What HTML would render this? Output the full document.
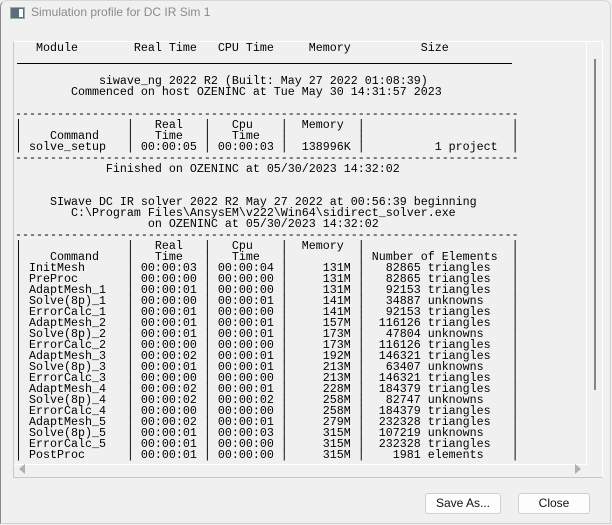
<!DOCTYPE html>
<html><head><meta charset="utf-8"><style>
html,body{margin:0;padding:0;}
body{width:612px;height:525px;background:#f0f0f0;position:relative;overflow:hidden;font-family:"Liberation Sans",sans-serif;}
.win{position:absolute;left:0;top:0;width:611px;height:524px;border-left:1px solid #8a8a8a;border-top:1px solid #d8d8d8;border-right:1px solid #d0d0d0;border-bottom:1px solid #d0d0d0;border-radius:7px 7px 0 0;box-sizing:border-box;background:#f0f0f0;}
.title{position:absolute;left:31px;top:5px;font-size:12px;color:#8a8a8a;}
.icon{position:absolute;left:10px;top:7px;width:13px;height:10px;background:#5a6e80;border:1px solid #9aa;}
.icon:after{content:"";position:absolute;right:1px;top:1px;width:4px;height:8px;background:#fff;}
.box{position:absolute;left:13px;top:41px;width:590px;height:437px;border-top:1px solid #fff;border-right:1px solid #fff;border-left:1px solid #c8c8c8;border-bottom:1px solid #c8c8c8;box-sizing:border-box;background:#f0f0f0;overflow:hidden;}
.vsep{position:absolute;left:586px;top:41px;width:1px;height:424px;background:#fff;}
.thumb{position:absolute;left:594px;top:59px;width:2px;height:331px;background:#858585;}
.hsep{position:absolute;left:14px;top:464px;width:572px;height:1px;background:#fff;}
pre{position:absolute;margin:0;font-family:"Liberation Mono",monospace;font-size:11.67px;line-height:11px;color:#000;white-space:pre;}
.solid{position:absolute;left:17px;top:63px;width:495px;height:1px;background:#000;}
.la{position:absolute;left:19px;top:464px;width:0;height:0;border-top:5px solid transparent;border-bottom:5px solid transparent;border-right:6px solid #b0b0b0;}
.ra{position:absolute;left:575px;top:464px;width:0;height:0;border-top:5px solid transparent;border-bottom:5px solid transparent;border-left:6px solid #b0b0b0;}
.btn{position:absolute;top:493px;height:21px;background:#fdfdfd;border:1px solid #d0d0d0;border-radius:3px;box-sizing:border-box;font-size:12px;text-align:center;line-height:19px;color:#111;}
</style></head><body>
<div class="win"></div>
<div class="icon"></div>
<div class="title">Simulation profile for DC IR Sim 1</div>
<div class="box"></div>
<div class="vsep"></div>
<div class="thumb"></div>
<div class="hsep"></div>
<div class="la"></div><div class="ra"></div>
<div style="position:absolute;left:14px;top:42px;width:572px;height:419px;overflow:hidden;">
<pre style="left:8px;top:0.5px;">  Module        Real Time   CPU Time     Memory          Size</pre>
<div class="solid" style="left:3px;top:21px;"></div>
<pre style="left:1px;top:0.5px;">



            siwave_ng 2022 R2 (Built: May 27 2022 01:08:39)
        Commenced on host OZENINC at Tue May 30 14:31:57 2023

------------------------------------------------------------------------
|               |   Real   |   Cpu    |  Memory  |                     |
|    Command    |   Time   |   Time   |          |                     |
| solve_setup   | 00:00:05 | 00:00:03 |  138996K |          1 project  |
------------------------------------------------------------------------
             Finished on OZENINC at 05/30/2023 14:32:02


     SIwave DC IR solver 2022 R2 May 27 2022 at 00:56:39 beginning
        C:\Program Files\AnsysEM\v222\Win64\sidirect_solver.exe
                   on OZENINC at 05/30/2023 14:32:02
------------------------------------------------------------------------
|               |   Real   |   Cpu    |  Memory  |                     |
|    Command    |   Time   |   Time   |          | Number of Elements  |
| InitMesh      | 00:00:03 | 00:00:04 |     131M |   82865 triangles   |
| PreProc       | 00:00:00 | 00:00:00 |     131M |   82865 triangles   |
| AdaptMesh_1   | 00:00:01 | 00:00:00 |     131M |   92153 triangles   |
| Solve(8p)_1   | 00:00:00 | 00:00:01 |     141M |   34887 unknowns    |
| ErrorCalc_1   | 00:00:01 | 00:00:00 |     141M |   92153 triangles   |
| AdaptMesh_2   | 00:00:01 | 00:00:01 |     157M |  116126 triangles   |
| Solve(8p)_2   | 00:00:01 | 00:00:01 |     173M |   47804 unknowns    |
| ErrorCalc_2   | 00:00:00 | 00:00:00 |     173M |  116126 triangles   |
| AdaptMesh_3   | 00:00:02 | 00:00:01 |     192M |  146321 triangles   |
| Solve(8p)_3   | 00:00:01 | 00:00:01 |     213M |   63407 unknowns    |
| ErrorCalc_3   | 00:00:00 | 00:00:00 |     213M |  146321 triangles   |
| AdaptMesh_4   | 00:00:02 | 00:00:01 |     228M |  184379 triangles   |
| Solve(8p)_4   | 00:00:02 | 00:00:02 |     258M |   82747 unknowns    |
| ErrorCalc_4   | 00:00:00 | 00:00:00 |     258M |  184379 triangles   |
| AdaptMesh_5   | 00:00:02 | 00:00:01 |     279M |  232328 triangles   |
| Solve(8p)_5   | 00:00:01 | 00:00:03 |     315M |  107219 unknowns    |
| ErrorCalc_5   | 00:00:01 | 00:00:00 |     315M |  232328 triangles   |
| PostProc      | 00:00:01 | 00:00:00 |     315M |    1981 elements    |
</pre>
</div>
<div class="btn" style="left:425px;width:76px;">Save As...</div>
<div class="btn" style="left:518px;width:72px;">Close</div>
</body></html>
